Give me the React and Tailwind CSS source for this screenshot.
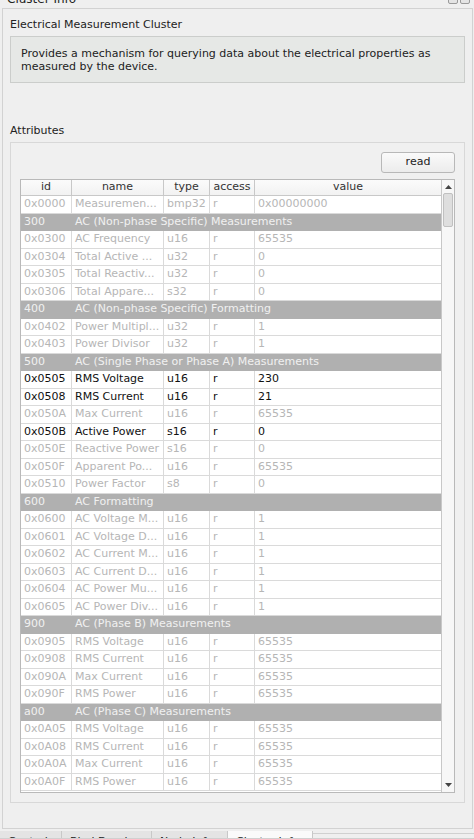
import React from 'react';

const rows = [
  ['0x0000', 'Measuremen...', 'bmp32', 'r', '0x00000000'],
  ['300', 'AC (Non-phase Specific) Measurements'],
  ['0x0300', 'AC Frequency', 'u16', 'r', '65535'],
  ['0x0304', 'Total Active ...', 'u32', 'r', '0'],
  ['0x0305', 'Total Reactiv...', 'u32', 'r', '0'],
  ['0x0306', 'Total Appare...', 's32', 'r', '0'],
  ['400', 'AC (Non-phase Specific) Formatting'],
  ['0x0402', 'Power Multipl...', 'u32', 'r', '1'],
  ['0x0403', 'Power Divisor', 'u32', 'r', '1'],
  ['500', 'AC (Single Phase or Phase A) Measurements'],
  ['0x0505', 'RMS Voltage', 'u16', 'r', '230', true],
  ['0x0508', 'RMS Current', 'u16', 'r', '21', true],
  ['0x050A', 'Max Current', 'u16', 'r', '65535'],
  ['0x050B', 'Active Power', 's16', 'r', '0', true],
  ['0x050E', 'Reactive Power', 's16', 'r', '0'],
  ['0x050F', 'Apparent Po...', 'u16', 'r', '65535'],
  ['0x0510', 'Power Factor', 's8', 'r', '0'],
  ['600', 'AC Formatting'],
  ['0x0600', 'AC Voltage M...', 'u16', 'r', '1'],
  ['0x0601', 'AC Voltage D...', 'u16', 'r', '1'],
  ['0x0602', 'AC Current M...', 'u16', 'r', '1'],
  ['0x0603', 'AC Current D...', 'u16', 'r', '1'],
  ['0x0604', 'AC Power Mu...', 'u16', 'r', '1'],
  ['0x0605', 'AC Power Div...', 'u16', 'r', '1'],
  ['900', 'AC (Phase B) Measurements'],
  ['0x0905', 'RMS Voltage', 'u16', 'r', '65535'],
  ['0x0908', 'RMS Current', 'u16', 'r', '65535'],
  ['0x090A', 'Max Current', 'u16', 'r', '65535'],
  ['0x090F', 'RMS Power', 'u16', 'r', '65535'],
  ['a00', 'AC (Phase C) Measurements'],
  ['0x0A05', 'RMS Voltage', 'u16', 'r', '65535'],
  ['0x0A08', 'RMS Current', 'u16', 'r', '65535'],
  ['0x0A0A', 'Max Current', 'u16', 'r', '65535'],
  ['0x0A0F', 'RMS Power', 'u16', 'r', '65535'],
];

// column widths: id, name, type, access, value
const cols = ['w-[51px]', 'w-[92px]', 'w-[46px]', 'w-[45px]', 'flex-1'];

const Row = ({ r }) => {
  if (r.length === 2) {
    return (
      <div className="flex h-[17.5px] items-center bg-[#b0b0b0] text-[#f0f0f0] border-b border-[#b0b0b0]">
        <div className="w-[51px] pl-[3px]">{r[0]}</div>
        <div className="pl-[3px] whitespace-nowrap">{r[1]}</div>
      </div>
    );
  }
  const color = r[5] ? 'text-[#111]' : 'text-[#b6b6b6]';
  return (
    <div className={`flex h-[17.5px] items-center bg-white border-b border-[#dadada] ${color}`}>
      {r.slice(0, 5).map((c, i) => (
        <div
          key={i}
          className={`${cols[i]} h-full flex items-center pl-[3px] whitespace-nowrap overflow-hidden ${i < 4 ? 'border-r border-[#dadada]' : ''}`}
        >
          {c}
        </div>
      ))}
    </div>
  );
};

const App = () => {
  return (
    <div className="w-[474px] h-[839px] overflow-hidden bg-[#efefef] text-[11px] text-[#222] font-['DejaVu_Sans',sans-serif] flex flex-col">
      {/* dock title, cut off at the top */}
      <div className="h-[8px] overflow-hidden flex justify-between pl-[7px] pr-[4px]">
        <span className="-mt-[8px] leading-[14px] text-[12px]">Cluster Info</span>
        <div className="flex gap-[2px] -mt-[6px]">
          <div className="w-[10px] h-[10px] border border-[#9a9a9a] rounded-[2px] bg-[#e4e4e4]" />
          <div className="w-[10px] h-[10px] border border-[#9a9a9a] rounded-[2px] bg-[#e4e4e4]" />
        </div>
      </div>

      <div className="ml-[2px] mr-px h-[821px] border border-[#d2d2d2] flex flex-col px-[7px]">
        <div className="mt-[9px] leading-[14px]">Electrical Measurement Cluster</div>
        <div className="mt-[4px] h-[47px] border border-[#cbcdcb] bg-[#e6e8e6] px-[10px] pt-[11px] leading-[12.5px]">
          Provides a mechanism for querying data about the electrical properties as measured by the device.
        </div>

        <div className="mt-[41px] leading-[14px]">Attributes</div>

        <div className="mt-[4px] h-[661px] border border-[#d8d8d8] bg-[#f0f0f0] flex flex-col px-[9px] pt-[9px]">
          <div className="flex justify-end">
            <button className="w-[74px] h-[21px] border border-[#b8b8b8] rounded-[3px] bg-gradient-to-b from-[#fafafa] to-[#ececec] text-[11px] text-[#222]">
              read
            </button>
          </div>

          <div className="mt-[6px] flex border border-[#b9b9b9] h-[614px]">
            <div className="flex-1 flex flex-col bg-white overflow-hidden">
              <div className="flex h-[16px] items-center border-b border-[#c8c8c8] bg-gradient-to-b from-[#fbfbfb] to-[#f2f2f2] text-[#333]">
                {['id', 'name', 'type', 'access', 'value'].map((h, i) => (
                  <div key={h} className={`${cols[i]} h-full flex items-center justify-center ${i < 4 ? 'border-r border-[#c8c8c8]' : ''}`}>
                    {h}
                  </div>
                ))}
              </div>
              {rows.map((r, i) => (
                <Row key={i} r={r} />
              ))}
            </div>
            {/* scrollbar */}
            <div className="w-[13px] border-l border-[#c8c8c8] bg-[#f7f7f7] flex flex-col">
              <div className="h-[13px] flex items-center justify-center">
                <svg width="7" height="4" viewBox="0 0 7 4"><path d="M0 4 L3.5 0 L7 4 Z" fill="#444" /></svg>
              </div>
              <div className="h-[34px] mx-px border border-[#c0c0c0] rounded-[2px] bg-[#dedede]" />
              <div className="flex-1" />
              <div className="h-[14px] flex items-center justify-center">
                <svg width="7" height="4" viewBox="0 0 7 4"><path d="M0 0 L7 0 L3.5 4 Z" fill="#444" /></svg>
              </div>
            </div>
          </div>
        </div>
      </div>

      {/* bottom tabs, mostly cut off */}
      <div className="mt-[2px] flex h-[8px] overflow-hidden border-b border-[#d0d0d0]">
        <div className="w-[62px] border-r border-[#c8c8c8] bg-[#e4e4e4] pl-[8px] pt-[4px] leading-[14px]">Control</div>
        <div className="w-[90px] border-r border-[#c8c8c8] bg-[#e4e4e4] pl-[8px] pt-[4px] leading-[14px]">Bind Dropbox</div>
        <div className="w-[76px] border-r border-[#c8c8c8] bg-[#e4e4e4] pl-[8px] pt-[4px] leading-[14px]">Node Info</div>
        <div className="w-[85px] border-r border-[#c8c8c8] bg-[#fafafa] pl-[8px] pt-[4px] leading-[14px]">Cluster Info</div>
        <div className="flex-1 mt-[2px] border-t border-[#d0d0d0]" />
      </div>
    </div>
  );
};

export default App;
